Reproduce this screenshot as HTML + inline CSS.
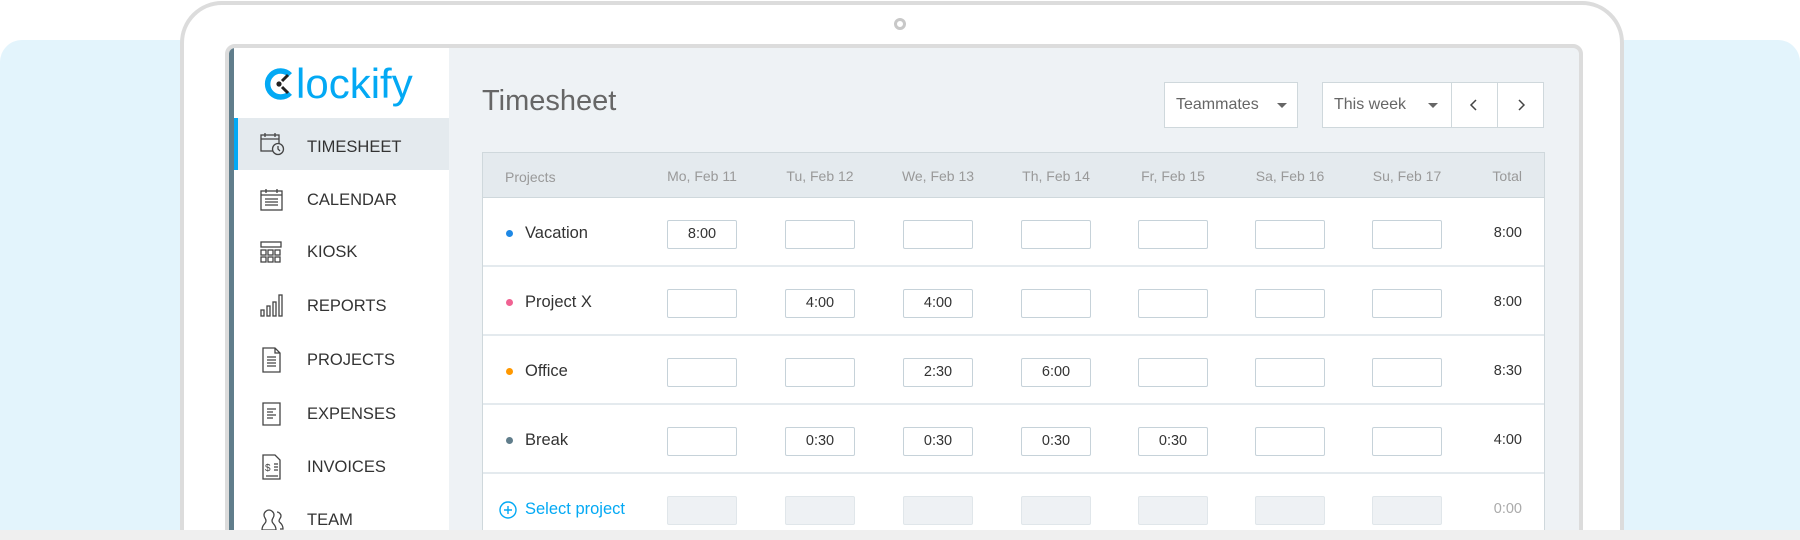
<!DOCTYPE html>
<html><head><meta charset="utf-8"><style>
*{margin:0;padding:0;box-sizing:border-box}
html,body{width:1800px;height:540px;overflow:hidden}
body{background:#fff;font-family:"Liberation Sans",Roboto,sans-serif;position:relative}
.bg{position:absolute;left:0;top:40px;width:1800px;height:520px;background:#e3f4fc;border-radius:22px}
.laptop{position:absolute;left:180px;top:1px;width:1444px;height:600px;background:#fff;border:4px solid #dcdcdc;border-radius:42px}
.cam{position:absolute;left:894px;top:18px;width:12px;height:12px;border:3px solid #c8c8c8;border-radius:50%}
.screen{position:absolute;left:225px;top:44px;width:1358px;height:560px;border:4px solid #dcdcdc;border-radius:10px;background:#eef2f5;overflow:hidden}
.side{position:absolute;left:0;top:0;width:220px;height:100%;background:#fff;border-left:5px solid #607d8b}
.logo{position:absolute;left:30px;top:12px;font-size:42px;color:#03a9f4;display:flex;align-items:center}
.nav{position:absolute;left:0;width:215px;height:52px;display:flex;align-items:center;font-size:16.5px;color:#333}
.nav svg{position:absolute;left:26px;transform:translateY(3px)}
.nav span{position:absolute;left:73px;transform:translateY(3px)}
.nav.act{background:#e4eaee;border-left:4px solid #03a9f4}
.nav.act svg{left:22px;transform:none}.nav.act span{left:69px}
.main{position:absolute;left:220px;top:0}
.title{position:absolute;left:33px;top:37px;font-size:29px;color:#666}
.dd{position:absolute;top:34px;height:46px;background:#fff;border:1px solid #cfd8dc;font-size:16px;color:#666;display:flex;align-items:center}
.tri{position:absolute;width:0;height:0;border-left:5px solid transparent;border-right:5px solid transparent;border-top:5px solid #666}
.tbl{position:absolute;left:33px;top:104px;width:1063px;height:500px;background:#fff;border:1px solid #cfd8dc}
.hdr{position:absolute;left:0;top:0;width:100%;height:45px;background:#e4eaee;border-bottom:1px solid #cfd8dc;font-size:14px;color:#999}
.hdr div{position:absolute;transform:translateX(-50%);white-space:nowrap}
.row{position:absolute;left:0;width:100%;height:69px;border-bottom:2px solid #e4eaee}
.name{position:absolute;left:42px;font-size:16.5px;color:#333;top:26px}
.dot{position:absolute;left:23px;top:32px;width:7px;height:7px;border-radius:50%}
.in{position:absolute;top:22px;width:70px;height:29px;border:1px solid #c6d2d9;border-radius:2px;font-size:14.5px;color:#333;text-align:center;line-height:27px;transform:translateX(-50%)}
.in.dis{background:#eef1f4;border-color:#e0e6ea}
.tot{position:absolute;right:22px;top:27px;font-size:14.5px;color:#333}
.strip{position:absolute;left:0;top:530px;width:1800px;height:10px;background:#efefef}
.c1{left:219px}.c2{left:337px}.c3{left:455px}.c4{left:573px}.c5{left:690px}.c6{left:807px}.c7{left:924px}
</style></head><body>
<div class="bg"></div>
<div class="laptop"></div>
<div class="cam"></div>
<div class="screen">
 <div class="side">
  <div class="logo"><svg width="32" height="34" viewBox="0 0 32 34"><path d="M26 8 A13 13 0 1 0 26 26" stroke="#03a9f4" stroke-width="5.5" fill="none"/><circle cx="15" cy="17" r="2.6" fill="#222"/><path d="M18 14 L24 8 M18 20 L24 26" stroke="#222" stroke-width="3"/></svg><span>lockify</span></div>
  <div class="nav act" style="top:70px"><svg width="26" height="24" viewBox="0 0 26 24" fill="none" stroke="#444" stroke-width="1.3"><rect x="1" y="3" width="18" height="16"/><path d="M1 7h18M5 1v4M15 1v4"/><circle cx="18" cy="17" r="5.5" fill="#e4eaee"/><path d="M18 14v3l2 2"/></svg><span>TIMESHEET</span></div>
  <div class="nav" style="top:123px"><svg width="24" height="24" viewBox="0 0 24 24" fill="none" stroke="#444" stroke-width="1.3"><rect x="1" y="3" width="21" height="19"/><path d="M1 7h21M6 1v4M17 1v4M5 11h13M5 14h13M5 17h13" /></svg><span>CALENDAR</span></div>
  <div class="nav" style="top:175px"><svg width="24" height="22" viewBox="0 0 24 22" fill="none" stroke="#444" stroke-width="1.3"><rect x="1" y="1" width="20" height="5"/><rect x="1" y="9" width="5" height="5"/><rect x="8" y="9" width="5" height="5"/><rect x="15" y="9" width="5" height="5"/><rect x="1" y="16" width="5" height="5"/><rect x="8" y="16" width="5" height="5"/><rect x="15" y="16" width="5" height="5"/></svg><span>KIOSK</span></div>
  <div class="nav" style="top:229px"><svg width="24" height="24" viewBox="0 0 24 24" fill="none" stroke="#444" stroke-width="1.3"><rect x="1" y="16" width="3" height="6"/><rect x="7" y="12" width="3" height="10"/><rect x="13" y="8" width="3" height="14"/><rect x="19" y="1" width="3" height="21"/></svg><span>REPORTS</span></div>
  <div class="nav" style="top:283px"><svg width="24" height="26" viewBox="0 0 24 26" fill="none" stroke="#444" stroke-width="1.3"><path d="M3 1h12l5 5v19H3z M15 1v5h5 M7 10h9M7 13h9M7 16h9M7 19h9"/></svg><span>PROJECTS</span></div>
  <div class="nav" style="top:337px"><svg width="24" height="26" viewBox="0 0 24 26" fill="none" stroke="#444" stroke-width="1.3"><path d="M3 2h17v22H3z M7 8h9M7 11h6M7 14h9M7 17h6"/></svg><span>EXPENSES</span></div>
  <div class="nav" style="top:390px"><svg width="24" height="26" viewBox="0 0 24 26" fill="none" stroke="#444" stroke-width="1.3"><path d="M3 1h12l5 5v19H3z M14 10h4M14 13h4M14 16h4M6 22h12"/><text x="5" y="17" font-size="10" fill="#444" stroke="none" font-family="Liberation Sans">$</text></svg><span>INVOICES</span></div>
  <div class="nav" style="top:443px"><svg width="26" height="22" viewBox="0 0 26 22" fill="none" stroke="#444" stroke-width="1.3"><path d="M2 21c0-6 4-6 4-9s-2-3-2-6 3-5 5-5 5 2 5 5-2 3-2 6 4 3 4 9z M17 3c2 0 4 2 4 4s-2 3-2 5 4 2 4 8h-3"/></svg><span>TEAM</span></div>
 </div>
 <div class="main">
  <div class="title">Timesheet</div>
  <div class="dd" style="left:715px;width:134px"><span style="margin-left:11px">Teammates</span><div class="tri" style="left:112px;top:20px"></div></div>
  <div class="dd" style="left:873px;width:222px"><span style="margin-left:11px">This week</span><div class="tri" style="left:105px;top:20px"></div>
   <div style="position:absolute;left:128px;top:0;height:44px;border-left:1px solid #cfd8dc"></div><div style="position:absolute;left:174px;top:0;height:44px;border-left:1px solid #cfd8dc"></div>
   <svg style="position:absolute;left:146px;top:15px" width="10" height="14"><path d="M7 2L2 7l5 5" stroke="#444" stroke-width="1.5" fill="none"/></svg>
   <svg style="position:absolute;left:193px;top:15px" width="10" height="14"><path d="M3 2l5 5-5 5" stroke="#444" stroke-width="1.5" fill="none"/></svg>
  </div>
  <div class="tbl">
   <div class="hdr">
    <div style="left:22px;top:16px;transform:none">Projects</div>
    <div class="c1" style="top:15px">Mo, Feb 11</div><div class="c2" style="top:15px">Tu, Feb 12</div><div class="c3" style="top:15px">We, Feb 13</div><div class="c4" style="top:15px">Th, Feb 14</div><div class="c5" style="top:15px">Fr, Feb 15</div><div class="c6" style="top:15px">Sa, Feb 16</div><div class="c7" style="top:15px">Su, Feb 17</div><div style="right:22px;left:auto;top:15px;transform:none">Total</div>
   </div>
   <div class="row" style="top:45px"><div class="dot" style="background:#1e88e5"></div><div class="name">Vacation</div>
    <div class="in c1">8:00</div><div class="in c2"></div><div class="in c3"></div><div class="in c4"></div><div class="in c5"></div><div class="in c6"></div><div class="in c7"></div><div class="tot">8:00</div></div>
   <div class="row" style="top:114px"><div class="dot" style="background:#f06292"></div><div class="name">Project X</div>
    <div class="in c1"></div><div class="in c2">4:00</div><div class="in c3">4:00</div><div class="in c4"></div><div class="in c5"></div><div class="in c6"></div><div class="in c7"></div><div class="tot">8:00</div></div>
   <div class="row" style="top:183px"><div class="dot" style="background:#ff9800"></div><div class="name">Office</div>
    <div class="in c1"></div><div class="in c2"></div><div class="in c3">2:30</div><div class="in c4">6:00</div><div class="in c5"></div><div class="in c6"></div><div class="in c7"></div><div class="tot">8:30</div></div>
   <div class="row" style="top:252px"><div class="dot" style="background:#607d8b"></div><div class="name">Break</div>
    <div class="in c1"></div><div class="in c2">0:30</div><div class="in c3">0:30</div><div class="in c4">0:30</div><div class="in c5">0:30</div><div class="in c6"></div><div class="in c7"></div><div class="tot">4:00</div></div>
   <div class="row" style="top:321px;border:none">
    <svg style="position:absolute;left:15px;top:26px" width="20" height="20" viewBox="0 0 20 20" fill="none" stroke="#03a9f4" stroke-width="1.4"><circle cx="10" cy="10" r="8"/><path d="M10 6v8M6 10h8"/></svg>
    <div class="name" style="color:#03a9f4">Select project</div>
    <div class="in dis c1"></div><div class="in dis c2"></div><div class="in dis c3"></div><div class="in dis c4"></div><div class="in dis c5"></div><div class="in dis c6"></div><div class="in dis c7"></div><div class="tot" style="color:#aaa">0:00</div></div>
  </div>
 </div>
</div>
<div class="strip"></div>
</body></html>
